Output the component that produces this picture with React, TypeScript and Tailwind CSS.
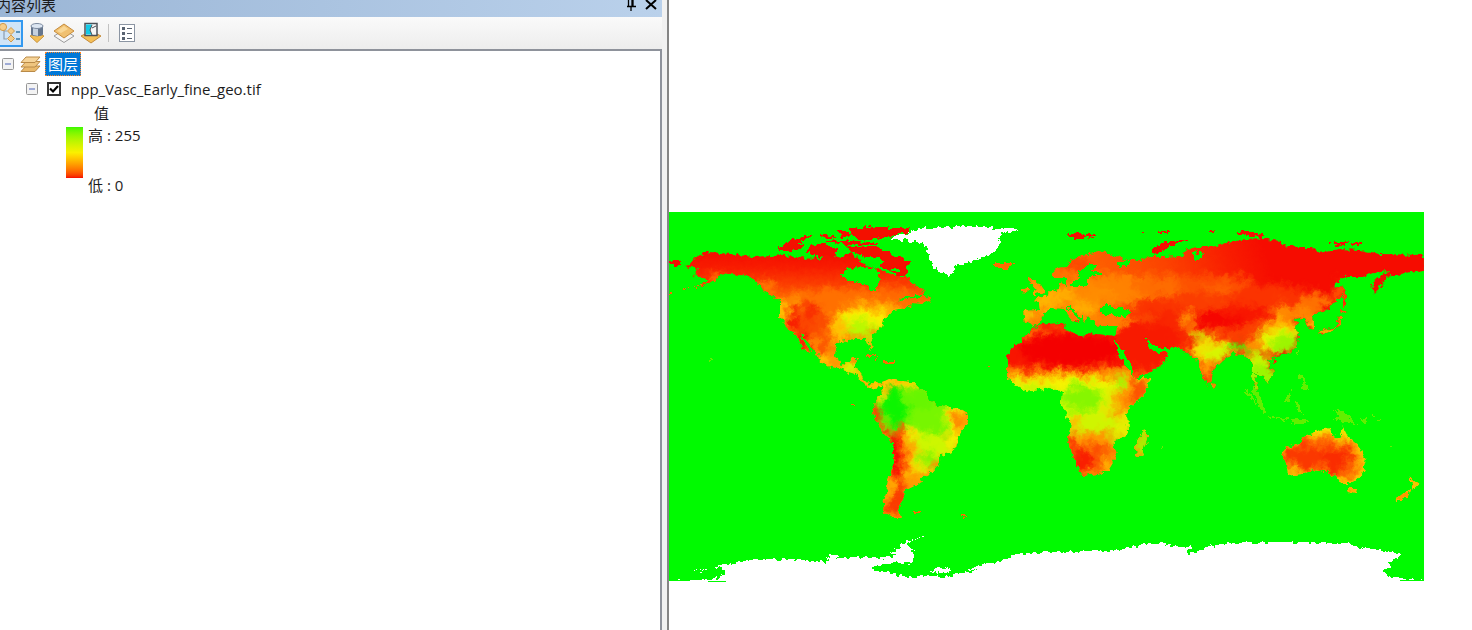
import React from 'react'

type Blob = {
    x: number;
    y: number;
    rx: number;
    ry: number;
    fill: string;
};

type ToolButtonProps = {
    label: string;
    active?: boolean;
    children: React.ReactNode;
};

const northAmerica =
    "M690 264L692 260L697 257L702 254L711 252L730 254L753 257L770 256L786 255L796 258L818 259L828 255L842 258L850 252L862 262L869 267L875 266L884 271L893 276L907 276L912 285L922 289L925 294L916 296L905 296L897 301L912 297L920 298L924 293L931 301L922 304L912 303L905 309L893 311L884 321L882 327L872 335L871 340L873 349L869 346L866 339L855 339L840 341L836 344L835 355L838 361L842 364L849 362L852 358L859 358L856 365L853 368L860 370L863 378L870 385L880 382L880 386L868 388L862 382L855 374L840 369L828 366L820 362L818 355L812 348L804 336L800 333L805 343L811 353L807 353L801 344L796 334L786 327L780 317L780 300L772 297L763 290L756 280L748 276L730 274L721 273L717 279L709 284L700 286L708 280L694 275L698 269L686 266Z";

const southAmerica =
    "M880 383L890 378L900 381L912 382L920 388L927 392L930 402L939 406L950 408L960 409L968 414L968 422L960 433L956 448L949 453L940 455L938 465L928 476L921 477L922 483L912 487L905 489L904 498L900 504L897 510L902 518L893 518L884 513L883 503L886 494L888 480L893 467L893 443L882 432L877 422L872 413L875 402L882 393Z";

const eurasia =
    "M1053 273L1058 268L1067 267L1070 260L1082 255L1100 252L1117 256L1128 261L1140 260L1150 257L1167 257L1183 255L1187 249L1197 247L1213 247L1227 243L1247 239L1262 238L1280 241L1283 245L1297 247L1312 247L1320 253L1340 249L1360 250L1380 254L1424 255L1424 270L1410 272L1397 275L1387 277L1380 287L1374 294L1372 283L1380 276L1390 271L1373 273L1363 277L1343 277L1332 286L1343 288L1342 297L1333 303L1327 311L1317 313L1311 317L1315 322L1315 329L1309 330L1308 323L1303 317L1293 320L1299 323L1295 326L1299 335L1298 345L1290 353L1273 357L1267 360L1274 373L1267 383L1265 375L1255 373L1258 392L1252 378L1252 363L1246 357L1240 355L1233 353L1223 360L1213 370L1212 380L1207 385L1200 370L1197 358L1192 357L1180 348L1167 348L1157 348L1147 339L1150 347L1162 352L1169 355L1163 363L1147 374L1135 380L1132 370L1115 344L1115 335L1118 326L1100 326L1092 320L1088 317L1084 322L1076 312L1068 306L1078 318L1074 322L1064 309L1054 308L1045 312L1042 320L1033 326L1025 322L1023 311L1040 310L1039 302L1033 299L1044 297L1050 292L1060 288L1062 282L1067 288L1066 278L1054 278Z";

const africa =
    "M1033 327L1047 324L1063 323L1067 330L1082 337L1087 333L1115 336L1117 346L1128 361L1134 378L1151 378L1145 393L1136 402L1127 410L1128 433L1113 443L1117 455L1108 470L1098 474L1082 476L1073 457L1068 438L1071 425L1062 405L1063 392L1050 388L1027 392L1016 385L1007 377L1007 357L1013 347L1020 342Z";

const australia =
    "M1282 453L1287 447L1300 443L1307 435L1320 430L1330 428L1332 435L1340 439L1343 427L1348 437L1360 447L1366 460L1362 475L1353 483L1340 483L1335 473L1332 477L1327 472L1313 470L1303 474L1288 476L1286 463Z";

// Red islands along the Arctic rim
const arcticIslands =
    "M778 249L780 246L788 242L792 239L803 239L802 242L792 243L806 244L798 250L786 251ZM800 236L812 236L812 239L800 240ZM821 235L838 236L832 238L821 237ZM810 247L820 243L829 246L838 249L835 258L815 257L806 252ZM826 241L846 242L846 244L826 243ZM838 230L848 231L851 236L842 237ZM850 229L866 227L910 228L909 232L895 235L884 238L878 240L858 240L852 235ZM842 241L880 242L876 245L842 245ZM848 247L877 247L888 252L893 255L900 257L912 262L906 266L907 274L898 276L888 270L878 268L884 262L878 256L866 257L850 252ZM669 261L678 260L681 263L676 266L669 264ZM1066 234L1077 233L1086 236L1081 240L1076 239ZM1087 234L1097 234L1096 236L1087 236ZM1089 237L1093 239L1088 239ZM1152 250L1158 246L1167 242L1180 240L1189 240L1180 243L1167 247L1163 252L1155 253ZM1142 232H1147V233H1142ZM1158 231H1169V233H1158ZM1236 232L1247 231L1264 235L1262 237L1249 236L1237 234ZM1330 243L1349 242L1348 245H1336ZM1353 243H1362V245H1353ZM1210 231H1214V232H1210ZM1180 240H1188V242H1180Z";

const islands =
    "M992 263L1003 263L1015 263L1011 267L1003 269L995 267ZM1029 278L1034 280L1040 285L1045 292L1040 294L1032 295L1036 290L1031 284ZM1022 288L1029 287L1028 293L1022 292ZM1317 333L1327 329L1336 327L1339 316L1342 316L1342 324L1332 331L1320 335ZM1341 309L1348 311L1342 313ZM1343 288L1346 291L1346 305L1343 307ZM1135 447L1139 438L1145 429L1149 434L1145 446L1142 456L1136 456ZM1349 488L1356 488L1355 494L1350 493ZM1409 476L1413 481L1419 483L1417 487L1411 489L1412 483ZM1397 499L1405 493L1410 489L1409 495L1400 501L1397 501ZM1212 382L1215 385L1214 389L1212 386ZM864 355L870 354L882 360L874 358ZM883 361L895 361L894 364L884 364ZM913 511H920V513L914 513ZM962 515L966 518H963ZM851 404H855V405H851ZM988 366H991V367H988ZM1273 359L1276 361L1274 364L1273 362ZM1072 317L1080 320L1078 322L1072 320ZM694 286L705 283L696 287ZM682 289L690 287L684 290ZM669 292L672 292L672 293L669 293Z";

const tropicalIslands =
    "M1252 384L1258 390L1263 404L1266 415L1263 413L1256 398L1252 390ZM1244 390L1251 394L1259 406L1250 398ZM1266 415L1276 417L1289 419L1289 421L1272 418ZM1291 419L1310 420L1304 425L1291 422ZM1332 409L1340 411L1348 415L1352 420L1357 426L1347 422L1334 420L1340 415ZM1297 400L1299 407L1303 413L1298 412L1295 407ZM1287 396L1292 389L1289 401L1283 404ZM1299 374L1306 380L1309 390L1302 388L1304 381L1298 377ZM1297 349H1299V354H1297ZM1360 419L1368 418L1364 423ZM1373 415L1382 422L1378 421ZM1389 445L1395 449L1391 447ZM711 359H713V361H711ZM1160 447H1162V448H1160Z";

const seas = [
    "M841 275L848 268L863 267L872 268L879 273L879 283L875 292L870 290L868 285L857 282L847 280Z",
    "M870 254L878 257L876 264L886 269L894 268L902 272L894 271L880 270L868 266Z",
    "M1071 284L1078 278L1080 270L1088 264L1097 265L1093 270L1103 274L1090 277L1086 286L1073 287Z",
    "M1102 307L1107 304L1112 308L1122 307L1132 313L1126 317L1113 315L1102 316Z",
    "M1115 261L1127 261L1129 264L1119 267Z",
    "M1146 339L1150 341L1154 346L1162 350L1166 351L1160 353L1149 348Z",
    "M1114 341L1118 344L1126 357L1134 370L1134 375L1129 371L1120 356Z",
    "M1135 377L1148 374L1152 377L1138 379Z",
    "M1066 306L1070 306L1076 312L1082 319L1078 317L1074 314Z",
    "M1192 252L1198 250L1196 255L1204 252L1201 259L1194 261Z",
];

const greenland =
    "M890 238L908 233L917 229L947 227L965 226L990 227L1000 229L1019 229L1012 232L1000 233L1001 237L998 245L995 253L983 257L968 263L956 265L954 271L950 276L940 273L934 266L930 259L927 248L918 242L905 240L892 239Z";

const antarctica =
    "M669 581L688 581L715 580L720 576L725 573L725 569L712 567L708 567L725 565L740 562L755 560L780 559L805 560L815 562L831 562L825 557L831 555L840 555L833 558L871 557L881 558L898 555L890 552L900 548L903 543L915 538L925 536L913 540L906 545L913 549L914 558L908 563L881 564L870 568L880 571L890 573L908 577L929 576L948 577L960 573L978 571L968 569L984 564L1001 562L1010 557L1021 553L1063 552L1110 551L1127 549L1140 545L1150 543L1162 543L1170 546L1190 546L1189 554L1200 550L1213 546L1230 543L1317 543L1347 543L1357 547L1380 550L1403 554L1400 557L1388 561L1392 567L1383 571L1387 576L1400 579L1424 580L1424 582L669 582ZM929 571L937 568L949 568L951 571L945 573L930 572ZM696 570H706V571H696Z";

const americaBlobs: Blob[] = [
    { x: 835, y: 302, rx: 60, ry: 13, fill: "#ff7000" },
    { x: 890, y: 297, rx: 28, ry: 8, fill: "#ff6a00" },
    { x: 765, y: 286, rx: 12, ry: 5, fill: "#ff7a00" },
    { x: 872, y: 308, rx: 30, ry: 7, fill: "#ffae00" },
    { x: 862, y: 321, rx: 27, ry: 11, fill: "#faef00" },
    { x: 858, y: 328, rx: 20, ry: 8, fill: "#b8f800" },
    { x: 870, y: 342, rx: 4, ry: 7, fill: "#b9f900" },
    { x: 808, y: 320, rx: 20, ry: 18, fill: "#fb4a00" },
    { x: 793, y: 323, rx: 7, ry: 9, fill: "#f91d00" },
    { x: 811, y: 313, rx: 5, ry: 8, fill: "#fa2a00" },
    { x: 803, y: 343, rx: 7, ry: 12, fill: "#f82000" },
    { x: 824, y: 345, rx: 6, ry: 13, fill: "#fc5600" },
    { x: 840, y: 330, rx: 6, ry: 18, fill: "#ffc400" },
    { x: 783, y: 308, rx: 4, ry: 11, fill: "#ffce00" },
    { x: 824, y: 362, rx: 8, ry: 4, fill: "#ffd500" },
    { x: 852, y: 370, rx: 14, ry: 9, fill: "#d7f200" },
    { x: 797, y: 302, rx: 6, ry: 4, fill: "#ff9c00" },
    { x: 718, y: 278, rx: 8, ry: 4, fill: "#ff7b00" },
    { x: 893, y: 383, rx: 32, ry: 5, fill: "#ffd000" },
    { x: 915, y: 415, rx: 38, ry: 32, fill: "#77f600" },
    { x: 896, y: 406, rx: 15, ry: 18, fill: "#0cf500" },
    { x: 916, y: 398, rx: 14, ry: 14, fill: "#66f600" },
    { x: 907, y: 384, rx: 9, ry: 4, fill: "#f6df00" },
    { x: 955, y: 424, rx: 10, ry: 22, fill: "#f4f000" },
    { x: 957, y: 421, rx: 6, ry: 11, fill: "#ff8700" },
    { x: 966, y: 416, rx: 3, ry: 7, fill: "#ff9900" },
    { x: 925, y: 448, rx: 29, ry: 15, fill: "#cdf700" },
    { x: 911, y: 434, rx: 8, ry: 5, fill: "#fbee00" },
    { x: 917, y: 463, rx: 14, ry: 13, fill: "#eee900" },
    { x: 928, y: 459, rx: 8, ry: 8, fill: "#86f500" },
    { x: 908, y: 457, rx: 9, ry: 22, fill: "#ffab00" },
    { x: 914, y: 481, rx: 10, ry: 6, fill: "#ff9d00" },
    { x: 899, y: 455, rx: 7, ry: 32, fill: "#fd4d00" },
    { x: 894, y: 455, rx: 5, ry: 20, fill: "#f60400" },
    { x: 876, y: 413, rx: 4, ry: 13, fill: "#fa3600" },
    { x: 884, y: 431, rx: 8, ry: 4, fill: "#fa2e00" },
    { x: 880, y: 396, rx: 5, ry: 10, fill: "#d8ed00" },
    { x: 900, y: 497, rx: 7, ry: 15, fill: "#fb3b00" },
    { x: 890, y: 487, rx: 4, ry: 12, fill: "#ffae00" },
    { x: 891, y: 508, rx: 9, ry: 6, fill: "#fa3700" },
    { x: 896, y: 518, rx: 9, ry: 2, fill: "#ff8500" },
];

const eurasiaBlobs: Blob[] = [
    { x: 1112, y: 290, rx: 60, ry: 16, fill: "#ff8200" },
    { x: 1170, y: 286, rx: 40, ry: 10, fill: "#fe6c00" },
    { x: 1215, y: 284, rx: 40, ry: 8, fill: "#fd5200" },
    { x: 1050, y: 301, rx: 24, ry: 11, fill: "#ffb400" },
    { x: 1070, y: 296, rx: 16, ry: 7, fill: "#ffae00" },
    { x: 1095, y: 295, rx: 22, ry: 8, fill: "#ff8c00" },
    { x: 1100, y: 320, rx: 38, ry: 7, fill: "#ff8100" },
    { x: 1085, y: 309, rx: 12, ry: 8, fill: "#ffac00" },
    { x: 1033, y: 318, rx: 10, ry: 7, fill: "#ff8d00" },
    { x: 1025, y: 314, rx: 3, ry: 7, fill: "#f3e800" },
    { x: 1064, y: 304, rx: 8, ry: 2, fill: "#ff6a00" },
    { x: 1075, y: 265, rx: 20, ry: 7, fill: "#fc4900" },
    { x: 1160, y: 310, rx: 30, ry: 13, fill: "#fb3400" },
    { x: 1170, y: 330, rx: 32, ry: 20, fill: "#f92600" },
    { x: 1147, y: 322, rx: 7, ry: 3, fill: "#ffae00" },
    { x: 1143, y: 346, rx: 36, ry: 25, fill: "#f81a00" },
    { x: 1205, y: 300, rx: 32, ry: 10, fill: "#fb3d00" },
    { x: 1222, y: 291, rx: 18, ry: 4, fill: "#fe6500" },
    { x: 1270, y: 296, rx: 42, ry: 11, fill: "#fb3300" },
    { x: 1290, y: 313, rx: 30, ry: 8, fill: "#ff8600" },
    { x: 1316, y: 303, rx: 16, ry: 9, fill: "#fe7000" },
    { x: 1340, y: 294, rx: 5, ry: 15, fill: "#fd5800" },
    { x: 1187, y: 317, rx: 7, ry: 5, fill: "#ff9b00" },
    { x: 1196, y: 328, rx: 10, ry: 4, fill: "#ff9200" },
    { x: 1275, y: 330, rx: 26, ry: 10, fill: "#ffb700" },
    { x: 1230, y: 328, rx: 36, ry: 13, fill: "#fb4000" },
    { x: 1222, y: 319, rx: 28, ry: 9, fill: "#f60500" },
    { x: 1250, y: 314, rx: 24, ry: 6, fill: "#f81600" },
    { x: 1278, y: 341, rx: 24, ry: 12, fill: "#e6f500" },
    { x: 1287, y: 344, rx: 16, ry: 9, fill: "#9cf500" },
    { x: 1213, y: 350, rx: 22, ry: 11, fill: "#f5df00" },
    { x: 1217, y: 353, rx: 15, ry: 8, fill: "#d7f500" },
    { x: 1207, y: 368, rx: 6, ry: 9, fill: "#ffa200" },
    { x: 1198, y: 358, rx: 3, ry: 8, fill: "#f6e000" },
    { x: 1200, y: 335, rx: 9, ry: 4, fill: "#d6ef00" },
    { x: 1240, y: 348, rx: 13, ry: 4, fill: "#49f200" },
    { x: 1256, y: 364, rx: 14, ry: 12, fill: "#c5f500" },
    { x: 1262, y: 378, rx: 16, ry: 14, fill: "#9cf600" },
    { x: 1245, y: 356, rx: 4, ry: 3, fill: "#ffc300" },
    { x: 1254, y: 345, rx: 7, ry: 7, fill: "#ff8f00" },
    { x: 1312, y: 325, rx: 5, ry: 7, fill: "#ffc800" },
    { x: 1329, y: 331, rx: 15, ry: 5, fill: "#eddb00" },
    { x: 1340, y: 320, rx: 4, ry: 8, fill: "#ffb700" },
    { x: 1345, y: 310, rx: 5, ry: 3, fill: "#ff8500" },
    { x: 1213, y: 386, rx: 4, ry: 4, fill: "#d0e900" },
    { x: 1033, y: 288, rx: 13, ry: 8, fill: "#ff9700" },
];

const africaBlobs: Blob[] = [
    { x: 1065, y: 374, rx: 75, ry: 8, fill: "#ff7f00" },
    { x: 1062, y: 350, rx: 80, ry: 20, fill: "#f81500" },
    { x: 1072, y: 350, rx: 52, ry: 15, fill: "#f40000" },
    { x: 1032, y: 331, rx: 16, ry: 4, fill: "#ff7400" },
    { x: 1060, y: 327, rx: 10, ry: 4, fill: "#fc4400" },
    { x: 1063, y: 382, rx: 60, ry: 6, fill: "#f7f200" },
    { x: 1033, y: 388, rx: 22, ry: 5, fill: "#c8f500" },
    { x: 1086, y: 405, rx: 30, ry: 24, fill: "#d6f700" },
    { x: 1082, y: 399, rx: 20, ry: 13, fill: "#86f600" },
    { x: 1115, y: 410, rx: 12, ry: 16, fill: "#e6e500" },
    { x: 1122, y: 403, rx: 8, ry: 12, fill: "#ff9c00" },
    { x: 1137, y: 393, rx: 13, ry: 16, fill: "#fd5400" },
    { x: 1129, y: 387, rx: 4, ry: 16, fill: "#ff9d00" },
    { x: 1119, y: 383, rx: 6, ry: 9, fill: "#d5f500" },
    { x: 1119, y: 383, rx: 3, ry: 5, fill: "#79f300" },
    { x: 1118, y: 414, rx: 4, ry: 4, fill: "#ff9000" },
    { x: 1095, y: 424, rx: 27, ry: 10, fill: "#cff500" },
    { x: 1122, y: 430, rx: 7, ry: 10, fill: "#e6ed00" },
    { x: 1074, y: 422, rx: 6, ry: 6, fill: "#ffb900" },
    { x: 1093, y: 439, rx: 24, ry: 8, fill: "#ff9800" },
    { x: 1090, y: 457, rx: 26, ry: 13, fill: "#fc5600" },
    { x: 1082, y: 463, rx: 10, ry: 13, fill: "#f91f00" },
    { x: 1070, y: 443, rx: 4, ry: 12, fill: "#fa3200" },
    { x: 1108, y: 464, rx: 6, ry: 11, fill: "#ffae00" },
    { x: 1114, y: 441, rx: 4, ry: 5, fill: "#b9f200" },
    { x: 1143, y: 443, rx: 7, ry: 17, fill: "#a8ee00" },
    { x: 1135, y: 449, rx: 3, ry: 8, fill: "#ff9e00" },
];

const oceaniaBlobs: Blob[] = [
    { x: 1324, y: 457, rx: 38, ry: 24, fill: "#ff8a00" },
    { x: 1324, y: 431, rx: 16, ry: 4, fill: "#f4ea00" },
    { x: 1345, y: 433, rx: 4, ry: 9, fill: "#eceb00" },
    { x: 1320, y: 445, rx: 24, ry: 6, fill: "#fe6900" },
    { x: 1310, y: 457, rx: 24, ry: 12, fill: "#fb3800" },
    { x: 1337, y: 461, rx: 15, ry: 14, fill: "#fa2c00" },
    { x: 1290, y: 455, rx: 8, ry: 12, fill: "#fb3a00" },
    { x: 1348, y: 473, rx: 7, ry: 7, fill: "#fe6900" },
    { x: 1352, y: 491, rx: 5, ry: 4, fill: "#ff9a00" },
    { x: 1402, y: 497, rx: 7, ry: 5, fill: "#ff8200" },
];

function Blobs({ items }: { items: Blob[] }) {
    return (
        <g filter="url(#soften)">
          {items.map((b, i) => (
            <ellipse key={i} cx={b.x} cy={b.y} rx={b.rx} ry={b.ry} fill={b.fill} />
          ))}
        </g>
    );
}

function RasterMap() {
    return (
        <svg
          viewBox="669 212 755 370"
          className="block h-auto w-full"
          shapeRendering="crispEdges"
          role="img"
          aria-label="npp_Vasc_Early_fine_geo.tif"
        >
          <defs>
            <linearGradient id="latitude" gradientUnits="userSpaceOnUse" x1="0" y1="250" x2="0" y2="310">
              <stop offset="0" stopColor="#f40c00" />
              <stop offset="0.28" stopColor="#f81b00" />
              <stop offset="0.6" stopColor="#fc4200" />
              <stop offset="0.85" stopColor="#ff7000" />
              <stop offset="1" stopColor="#ff9000" />
            </linearGradient>
            <linearGradient id="siberia" gradientUnits="userSpaceOnUse" x1="1070" y1="300" x2="1260" y2="235">
              <stop offset="0" stopColor="#ff7000" />
              <stop offset="0.5" stopColor="#fc4300" />
              <stop offset="0.8" stopColor="#f91e00" />
              <stop offset="1" stopColor="#f60c00" />
            </linearGradient>
            <linearGradient id="sahel" gradientUnits="userSpaceOnUse" x1="0" y1="365" x2="0" y2="440">
              <stop offset="0" stopColor="#f91f00" />
              <stop offset="0.2" stopColor="#eaf000" />
              <stop offset="0.8" stopColor="#eaf000" />
              <stop offset="1" stopColor="#ff8500" />
            </linearGradient>
            <filter id="soften" x="-10%" y="-10%" width="120%" height="120%" colorInterpolationFilters="sRGB">
              <feTurbulence type="fractalNoise" baseFrequency="0.09" numOctaves="3" seed="9" result="noise" />
              <feGaussianBlur in="SourceGraphic" stdDeviation="3" result="soft" />
              <feDisplacementMap in="soft" in2="noise" scale="16" xChannelSelector="R" yChannelSelector="G" />
            </filter>
            <filter id="coast" filterUnits="userSpaceOnUse" x="669" y="212" width="755" height="370" colorInterpolationFilters="sRGB">
              <feTurbulence type="fractalNoise" baseFrequency="0.22" numOctaves="2" seed="4" result="noise" />
              <feDisplacementMap in="SourceGraphic" in2="noise" scale="7" xChannelSelector="R" yChannelSelector="G" />
            </filter>
            <clipPath id="americas">
              <path d={northAmerica} />
              <path d={southAmerica} />
            </clipPath>
            <clipPath id="oldWorld">
              <path d={eurasia} />
              <path d={islands} />
            </clipPath>
            <clipPath id="africaShape">
              <path d={africa} />
              <path d={islands} />
            </clipPath>
            <clipPath id="oceania">
              <path d={australia} />
              <path d={islands} />
            </clipPath>
          </defs>
          <rect x="669" y="212" width="755" height="370" fill="#00fa00" />
          <g filter="url(#coast)">
            <path d={islands} fill="#ff6a00" />
            <path d={arcticIslands} fill="#f31000" />
            <g clipPath="url(#americas)">
              <rect x="669" y="212" width="310" height="320" fill="url(#latitude)" />
              <Blobs items={americaBlobs} />
            </g>
            <g clipPath="url(#oldWorld)">
              <rect x="1018" y="212" width="406" height="190" fill="url(#siberia)" />
              <Blobs items={eurasiaBlobs} />
            </g>
            <g clipPath="url(#africaShape)">
              <rect x="1000" y="321" width="156" height="160" fill="url(#sahel)" />
              <Blobs items={africaBlobs} />
            </g>
            <g clipPath="url(#oceania)">
              <rect x="1278" y="424" width="146" height="82" fill="#fbc400" />
              <Blobs items={oceaniaBlobs} />
            </g>
            <path d={tropicalIslands} fill="#63ee00" />
            {seas.map((d) => (
              <path key={d} d={d} fill="#00fa00" />
            ))}
            <path d={greenland} fill="#fff" />
            <path d={antarctica} fill="#fff" />
          </g>
          <rect x="669" y="580" width="755" height="2" fill="#fff" />
          <path d="M669 580H690V581H669ZM708 581H726V582H708ZM1400 580H1424V581H1400Z" fill="#00fa00" />
        </svg>
    );
}

function ToolButton({ label, active, children }: ToolButtonProps) {
    return (
        <button
          type="button"
          aria-label={label}
          className={
            active
              ? "flex h-[27px] w-[27px] items-center justify-center border-2 border-[#3399f0] bg-[#cfe4f7]"
              : "flex h-[27px] w-[27px] items-center justify-center"
          }
        >
          {children}
        </button>
    );
}

function Toolbar() {
    return (
        <div className="-ml-1 flex h-8 items-center bg-linear-to-b from-[#fafafa] to-[#ededed]">
          <ToolButton label="按绘制顺序列出" active>
            <svg width="23" height="22" viewBox="0 0 23 22" className="shrink-0">
              <path d="M6 8V17H9M6 9H9" fill="none" stroke="#8c9db0" strokeWidth="1.2" />
              <circle cx="5" cy="5" r="3.6" fill="#f5cd88" stroke="#d09a4c" />
              <path d="M13 5.5L16.500 9L13 12.500L9.500 9ZM13 13L16.500 16.500L13 20L9.500 16.500Z" fill="#f5cd88" stroke="#d09a4c" />
              <path d="M18 10H22M18 17H22" stroke="#3a79a8" strokeWidth="1.6" />
            </svg>
          </ToolButton>
          <ToolButton label="按源列出">
            <svg width="20" height="22" viewBox="0 0 20 22">
              <path d="M3 14L10 11L17 14L10 20.500Z" fill="#f3bd54" stroke="#c9953f" />
              <path d="M4 4V12C4 15 16 15 16 12V4Z" fill="#65768d" />
              <path d="M6 5V13L11 14V5Z" fill="#c5d1e0" />
              <ellipse cx="10" cy="4" rx="6" ry="2.5" fill="#dce6f2" stroke="#7d8ba0" />
            </svg>
          </ToolButton>
          <ToolButton label="按可见性列出">
            <svg width="22" height="22" viewBox="0 0 22 22">
              <path d="M1 14L11 8L21 14L11 20.500Z" fill="#f6f6f6" stroke="#9b9b9b" />
              <path d="M1 9L11 2L21 9L11 16Z" fill="#f0c070" stroke="#c58b3b" />
              <path d="M4 9L11 4L15 7L8 11Z" fill="#f9d795" />
            </svg>
          </ToolButton>
          <ToolButton label="按选择列出">
            <svg width="22" height="22" viewBox="0 0 22 22">
              <path d="M1 14L11 9L21 14L11 21Z" fill="#f4bf58" stroke="#c58b3b" />
              <rect x="5" y="1.500" width="12" height="12" fill="#f7f7f7" stroke="#4c5158" strokeWidth="1.500" />
              <path d="M6 2.500H12L10 8L12 12.500H6Z" fill="#13c9e6" />
              <path d="M12 3L10 8L12 13M12 6L16 4" fill="none" stroke="#4c5158" />
            </svg>
          </ToolButton>
          <span className="mx-1 h-[18px] w-px bg-[#c2c2c2]" />
          <ToolButton label="选项">
            <svg width="18" height="20" viewBox="0 0 18 20">
              <rect x="1.500" y="1.500" width="15" height="17" fill="#fff" stroke="#8b95a3" />
              <path d="M4 4H7V7H4ZM4 9H7V12H4ZM4 14H7V17H4Z" fill="#5a6472" />
              <path d="M9 5.500H14M9 10.500H14M9 15.500H14" stroke="#5a6472" strokeWidth="1.200" />
            </svg>
          </ToolButton>
        </div>
    );
}

function CollapseButton({ label }: { label: string }) {
    return (
        <button type="button" aria-label={label} className="shrink-0">
          <svg width="12" height="12" viewBox="0 0 12 12" className="block">
            <rect x="0.500" y="0.500" width="11" height="11" rx="1" fill="#f3f3f3" stroke="#969696" />
            <path d="M3 6H9" stroke="#4a63b8" />
          </svg>
        </button>
    );
}

function LayerTree() {
    return (
        <div className="flex-1 border-t-2 border-r-2 border-[#8e929b] bg-white text-[15px] leading-5">
          {/* Data frame */}
          <div className="flex h-[25px] items-center pl-0.5">
            <CollapseButton label="折叠图层" />
            <svg width="21" height="18" viewBox="0 0 21 18" className="ml-1.5 shrink-0">
              <path d="M1 16.500L6 11H20L15 16.500Z" fill="#e9b96c" stroke="#b98a48" />
              <path d="M1 12L6 6.500H20L15 12Z" fill="#efc57f" stroke="#b98a48" />
              <path d="M1 7.500L6 2H20L15 7.500Z" fill="#f6d499" stroke="#b98a48" />
            </svg>
            <span className="ml-1 border border-dotted border-[#ff8728] bg-[#0078d7] px-0.5 leading-[22px] text-white">
              图层
            </span>
          </div>

          {/* Raster layer */}
          <div className="flex h-[25px] items-center pl-[26px]">
            <CollapseButton label="折叠 npp_Vasc_Early_fine_geo.tif" />
            <span className="ml-[9px] grid shrink-0">
              <input
                type="checkbox"
                id="layer"
                defaultChecked
                className="peer col-start-1 row-start-1 h-[14px] w-[14px] appearance-none border-2 border-[#333] bg-white"
              />
              <svg
                width="14"
                height="14"
                viewBox="0 0 14 14"
                className="pointer-events-none invisible col-start-1 row-start-1 peer-checked:visible"
              >
                <path d="M3 6.500L6 9.500L11 4" fill="none" stroke="#000" strokeWidth="2.200" />
              </svg>
            </span>
            <label htmlFor="layer" className="ml-2.5">npp_Vasc_Early_fine_geo.tif</label>
          </div>

          {/* Legend */}
          <p className="h-[26px] pt-0.5 pl-[94px]">值</p>
          <div className="flex pl-[66px]">
            <div className="h-[51px] w-[17px] bg-linear-to-b from-[#38f800] via-[#faf000] to-[#f60000]" />
            <dl className="-mt-0.5 ml-[5px] flex h-[70px] flex-col justify-between">
              <div className="flex gap-1">
                <dt>高 :</dt>
                <dd>255</dd>
              </div>
              <div className="flex gap-1">
                <dt>低 :</dt>
                <dd>0</dd>
              </div>
            </dl>
          </div>
        </div>
    );
}

function ContentsPanel() {
    return (
        <aside className="flex w-5/11 shrink-0 flex-col border-r-2 border-[#858585] bg-[#f1f1f1] pr-[5px]">
          <header className="-mt-2 flex h-[25px] shrink-0 items-center justify-between bg-linear-to-r from-[#9bb6d6] to-[#bad1eb] pr-1">
            <h1 className="-ml-1 text-[15px] leading-5">内容列表</h1>
            <div className="flex gap-1.5">
              <button type="button" aria-label="自动隐藏">
                <svg width="14" height="14" viewBox="0 0 14 14" className="block">
                  <path d="M4.500 1V8M8 1V8M9 1V8M3 8.500H12M7 9V13" fill="none" stroke="#000" strokeWidth="1.300" />
                </svg>
              </button>
              <button type="button" aria-label="关闭">
                <svg width="14" height="14" viewBox="0 0 14 14" className="block">
                  <path d="M2 2L12 11M12 2L2 11" stroke="#000" strokeWidth="2" />
                </svg>
              </button>
            </div>
          </header>
          <Toolbar />
          <LayerTree />
        </aside>
    );
}

function App() {
    return (
        <div className="flex min-h-screen overflow-hidden bg-white font-['Open_Sans','Noto_Sans_CJK_SC',sans-serif] text-[#1c1c1c]">
          <ContentsPanel />
          <main className="min-w-0 flex-1 pt-[212px] pr-12">
            <RasterMap />
          </main>
        </div>
    );
}

export default App;
